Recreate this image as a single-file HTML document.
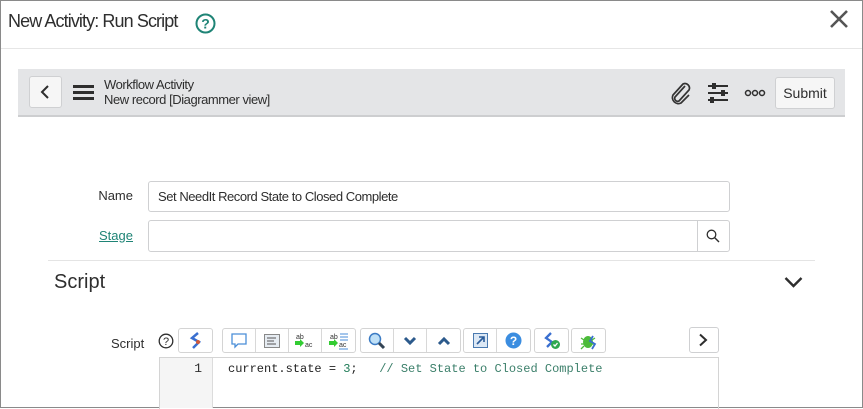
<!DOCTYPE html>
<html><head><meta charset="utf-8"><style>
*{box-sizing:border-box;margin:0;padding:0}
html,body{width:863px;height:408px;overflow:hidden;background:#fff;font-family:"Liberation Sans",sans-serif;color:#2e2e2e}
.frame{position:absolute;left:0;top:0;width:863px;height:408px;border:1px solid #8a8a8a}
.abs{position:absolute}
.btn{position:absolute;border:1px solid #cfd0d2;border-radius:3px;background:#fff}
.tb{position:absolute;top:328px;height:25px;border:1px solid #d4d4d4;border-radius:3px;background:#fff;display:flex}
.tb div{width:33px;height:23px;border-right:1px solid #d8d8d8;display:flex;align-items:center;justify-content:center}
.tb div:last-child{border-right:none}
</style></head><body>
<div class="frame"></div>
<div class="abs" style="left:8px;top:11px;font-size:18px;letter-spacing:-0.9px;color:#2e2e2e">New Activity: Run Script</div>
<svg class="abs" style="left:195px;top:13px" width="21" height="21" viewBox="0 0 21 21"><circle cx="10.5" cy="10.5" r="9" fill="none" stroke="#1f8476" stroke-width="2"/><text x="10.5" y="15.5" text-anchor="middle" font-size="14" font-weight="bold" fill="#1f8476" font-family="Liberation Sans">?</text></svg>
<svg class="abs" style="left:829px;top:9px" width="20" height="20" viewBox="0 0 20 20"><path d="M2 2L18 18M18 2L2 18" stroke="#555" stroke-width="2.6"/></svg>
<div class="abs" style="left:1px;top:48px;width:861px;height:1px;background:#e6e6e6"></div>

<div class="abs" style="left:18px;top:69px;width:827px;height:48px;background:#e4e5e7;border-bottom:2px solid #cdced0"></div>
<div class="btn" style="left:29px;top:76px;width:33px;height:32px;background:#f6f6f6"></div>
<svg class="abs" style="left:39px;top:84px" width="14" height="16" viewBox="0 0 14 16"><path d="M9 2L3 8L9 14" fill="none" stroke="#2e2e2e" stroke-width="2"/></svg>
<svg class="abs" style="left:73px;top:84px" width="21" height="17" viewBox="0 0 21 17"><rect y="1" width="21" height="3" fill="#2e2e2e"/><rect y="7" width="21" height="3" fill="#2e2e2e"/><rect y="13" width="21" height="3" fill="#2e2e2e"/></svg>
<div class="abs" style="left:104px;top:77px;font-size:13px;line-height:15px;letter-spacing:-0.45px;color:#2e2e2e">Workflow Activity<br>New record [Diagrammer view]</div>
<svg class="abs" style="left:670px;top:82px" width="22" height="24" viewBox="0 0 22 24"><path d="M15 4L5 15a3 3 0 0 0 4 4L19 8a4.5 4.5 0 0 0-6-6L3 13a6 6 0 0 0 8 8l8-8" fill="none" stroke="#333" stroke-width="1.7"/></svg>
<svg class="abs" style="left:707px;top:82px" width="22" height="22" viewBox="0 0 22 22"><path d="M1 4H21M1 11H21M1 18H21" stroke="#2e2e2e" stroke-width="2"/><rect x="5" y="1" width="4" height="6" fill="#2e2e2e"/><rect x="14" y="8" width="4" height="6" fill="#2e2e2e"/><rect x="3" y="15" width="4" height="6" fill="#2e2e2e"/></svg>
<svg class="abs" style="left:744px;top:88px" width="22" height="10" viewBox="0 0 22 10"><circle cx="4" cy="5" r="2.5" fill="none" stroke="#2e2e2e" stroke-width="1.5"/><circle cx="11" cy="5" r="2.5" fill="none" stroke="#2e2e2e" stroke-width="1.5"/><circle cx="18" cy="5" r="2.5" fill="none" stroke="#2e2e2e" stroke-width="1.5"/></svg>
<div class="btn" style="left:775px;top:77px;width:60px;height:32px;background:#f6f6f6;font-size:14px;line-height:30px;text-align:center;color:#2e2e2e">Submit</div>

<div class="abs" style="left:60px;top:188px;width:73px;text-align:right;font-size:13px">Name</div>
<div class="btn" style="left:148px;top:181px;width:582px;height:31px;padding-left:9px;font-size:13px;line-height:29px;letter-spacing:-0.45px">Set NeedIt Record State to Closed Complete</div>
<div class="abs" style="left:60px;top:228px;width:73px;text-align:right;font-size:13px;color:#1f8476;text-decoration:underline">Stage</div>
<div class="btn" style="left:148px;top:220px;width:582px;height:32px"></div>
<div class="abs" style="left:697px;top:221px;width:1px;height:30px;background:#cfd0d2"></div>
<svg class="abs" style="left:706px;top:229px" width="14" height="14" viewBox="0 0 14 14"><circle cx="5.5" cy="5.5" r="4.3" fill="none" stroke="#2e2e2e" stroke-width="1.3"/><path d="M8.5 8.5L13 13" stroke="#2e2e2e" stroke-width="1.4"/></svg>
<div class="abs" style="left:48px;top:260px;width:767px;height:1px;background:#e4e4e4"></div>
<div class="abs" style="left:54px;top:271px;font-size:20px;color:#2e2e2e">Script</div>
<svg class="abs" style="left:784px;top:276px" width="19" height="12" viewBox="0 0 19 12"><path d="M1.5 2L9.5 10L17.5 2" fill="none" stroke="#2e2e2e" stroke-width="2.4"/></svg>

<div class="abs" style="left:111px;top:336px;font-size:13px">Script</div>
<svg class="abs" style="left:158px;top:333px" width="16" height="16" viewBox="0 0 16 16"><circle cx="8" cy="8" r="6.8" fill="none" stroke="#2e2e2e" stroke-width="1.3"/><text x="8" y="12" text-anchor="middle" font-size="11" fill="#2e2e2e" font-family="Liberation Sans">?</text></svg>
<div class="tb" style="left:178px"><div><svg width="14" height="18" viewBox="0 0 14 18"><path d="M9 1L3 6L10 10L4 16" fill="none" stroke="#3a6fd0" stroke-width="2.5"/><circle cx="9" cy="10" r="2" fill="#d05a3a"/></svg></div></div>
<div class="tb" style="left:222px">
<div><svg width="18" height="16" viewBox="0 0 18 16"><path d="M2 1H16V11H8L5 14V11H2Z" fill="#fff" stroke="#4a8ed8" stroke-width="1.3"/></svg></div>
<div><svg width="16" height="14" viewBox="0 0 16 14"><rect x="0.5" y="0.5" width="15" height="13" fill="#e6ecf2" stroke="#888"/><path d="M3 4H12M3 7H10M3 10H12" stroke="#555"/></svg></div>
<div><svg width="22" height="18" viewBox="0 0 22 18"><text x="2" y="7" font-size="7" fill="#333" font-family="Liberation Sans">ab</text><path d="M1 9H6V7L10 11L6 15V13H1Z" fill="#3c3"/><text x="11" y="15" font-size="7" fill="#333" font-family="Liberation Sans">ac</text></svg></div>
<div><svg width="22" height="18" viewBox="0 0 22 18"><text x="2" y="7" font-size="7" fill="#333" font-family="Liberation Sans">ab</text><path d="M12 2H20M12 5H20M12 8H20" stroke="#4a8ed8"/><path d="M1 9H6V7L10 11L6 15V13H1Z" fill="#3c3"/><text x="11" y="15" font-size="7" fill="#333" font-family="Liberation Sans">ac</text><path d="M11 17H20" stroke="#4a8ed8"/></svg></div>
</div>
<div class="tb" style="left:360px">
<div><svg width="18" height="18" viewBox="0 0 18 18"><circle cx="7" cy="7" r="5.5" fill="#bfe0f7" stroke="#3b7bc4" stroke-width="1.5"/><path d="M11 11L16 16" stroke="#345" stroke-width="3"/></svg></div>
<div><svg width="14" height="10" viewBox="0 0 14 10"><path d="M2 2L7 7L12 2" fill="none" stroke="#2c5a8c" stroke-width="3"/></svg></div>
<div><svg width="14" height="10" viewBox="0 0 14 10"><path d="M2 8L7 3L12 8" fill="none" stroke="#2c5a8c" stroke-width="3"/></svg></div>
</div>
<div class="tb" style="left:463px">
<div><svg width="15" height="15" viewBox="0 0 15 15"><rect x="0.5" y="0.5" width="14" height="14" fill="#dce8f5" stroke="#4a7ab0"/><path d="M4 11L11 4M6 4H11V9" fill="none" stroke="#2b5c9a" stroke-width="1.6"/></svg></div>
<div><svg width="17" height="17" viewBox="0 0 17 17"><circle cx="8.5" cy="8.5" r="8" fill="#3b8de0"/><text x="8.5" y="13" text-anchor="middle" font-size="12" font-weight="bold" fill="#fff" font-family="Liberation Sans">?</text></svg></div>
</div>
<div class="tb" style="left:534px"><div><svg width="18" height="18" viewBox="0 0 18 18"><path d="M8 1L3 6L9 10L4 15" fill="none" stroke="#3a6fd0" stroke-width="2.3"/><circle cx="12.5" cy="12.5" r="4.5" fill="#2fa84f"/><path d="M10.5 12.5L12 14L14.5 11" fill="none" stroke="#fff" stroke-width="1.3"/></svg></div></div>
<div class="tb" style="left:571px"><div><svg width="20" height="18" viewBox="0 0 20 18"><ellipse cx="9" cy="10" rx="5" ry="6" fill="#4cbb3a"/><path d="M2 6L5 8M2 12H5M2 17L5 14M16 6L13 8M16 12H13" stroke="#4cbb3a" stroke-width="1.3"/><path d="M14 4L11 9L16 12L13 17" fill="none" stroke="#3a6fd0" stroke-width="1.8"/></svg></div></div>
<div class="btn" style="left:689px;top:327px;width:30px;height:26px"></div>
<svg class="abs" style="left:697px;top:333px" width="12" height="14" viewBox="0 0 12 14"><path d="M3 1.5L9 7L3 12.5" fill="none" stroke="#2e2e2e" stroke-width="2"/></svg>

<div class="abs" style="left:159px;top:357px;width:560px;height:52px;border:1px solid #d4d4d4;border-bottom:none"></div>
<div class="abs" style="left:160px;top:358px;width:53px;height:50px;background:#f5f5f5;border-right:1px solid #dcdcdc"></div>
<div class="abs" style="left:160px;top:361px;width:42px;text-align:right;font-family:'Liberation Mono',monospace;font-size:13px">1</div>
<div class="abs" style="left:228px;top:362px;font-family:'Liberation Mono',monospace;font-size:12px;white-space:pre;color:#222">current.state = <span style="color:#1c7a55">3</span>;   <span style="color:#3b7f6a">// Set State to Closed Complete</span></div>
</body></html>
